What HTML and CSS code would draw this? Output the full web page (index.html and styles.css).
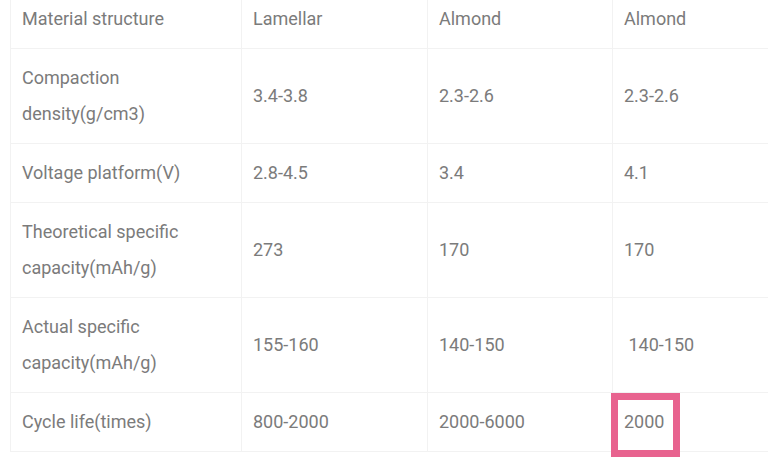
FILE: index.html
```html
<!DOCTYPE html>
<html>
<head>
<meta charset="utf-8">
<link rel="stylesheet" href="styles.css">
</head>
<body>
<table class="spec">
  <colgroup>
    <col class="c1"><col class="c2"><col class="c3"><col class="c4">
  </colgroup>
  <tr><td>Material structure</td><td>Lamellar</td><td>Almond</td><td>Almond</td></tr>
  <tr><td>Compaction<br>density(g/cm3)</td><td>3.4-3.8</td><td>2.3-2.6</td><td>2.3-2.6</td></tr>
  <tr><td>Voltage platform(V)</td><td>2.8-4.5</td><td>3.4</td><td>4.1</td></tr>
  <tr><td>Theoretical specific<br>capacity(mAh/g)</td><td>273</td><td>170</td><td>170</td></tr>
  <tr><td>Actual specific<br>capacity(mAh/g)</td><td>155-160</td><td>140-150</td><td>&nbsp;140-150</td></tr>
  <tr><td>Cycle life(times)</td><td>800-2000</td><td>2000-6000</td><td class="highlight">2000<span class="mark"></span></td></tr>
</table>
</body>
</html>
```
FILE: styles.css
```css
html, body {
  margin: 0;
  padding: 0;
  background: #ffffff;
  overflow: hidden;
  width: 768px;
  height: 468px;
}
body {
  font-family: Roboto, "Noto Sans", sans-serif;
  font-size: 18px;
  color: #7b7b7b;
}
.spec {
  border-collapse: collapse;
  table-layout: fixed;
  width: 787px;
  margin: -11px 0 0 10px;
}
.c1 { width: 231px; }
.c2 { width: 186px; }
.c3 { width: 185px; }
.c4 { width: 185px; }
.spec td {
  border: 1px solid #f2f2f2;
  padding: 11px 11px 11px;
  line-height: 36px;
  vertical-align: middle;
  text-align: left;
  white-space: nowrap;
}
.spec td.highlight {
  position: relative;
}
.mark {
  position: absolute;
  left: -2px;
  top: 0;
  width: 69px;
  height: 64px;
  box-sizing: border-box;
  border: 7px solid #e8638f;
}
```
